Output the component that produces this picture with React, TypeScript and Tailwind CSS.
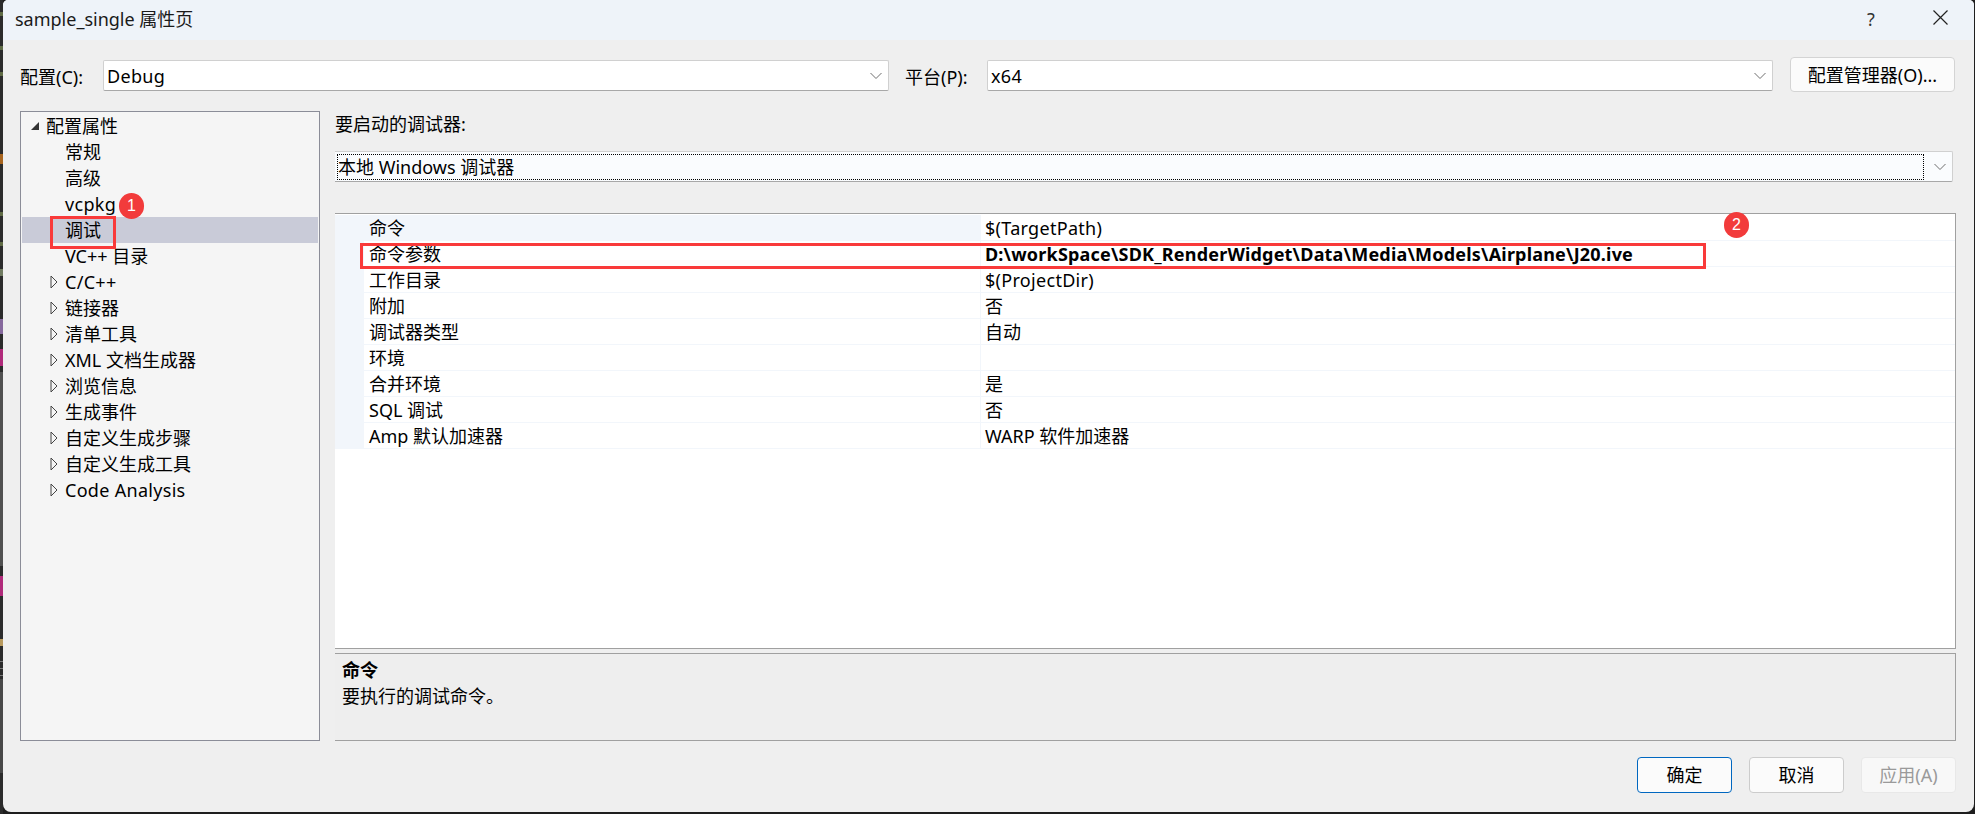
import React from 'react';

const treeItems = [
  { label: '常规' },
  { label: '高级' },
  { label: 'vcpkg', latin: true },
  { label: '调试', selected: true },
  { label: 'VC++ 目录' },
  { label: 'C/C++', arrow: true, latin: true },
  { label: '链接器', arrow: true },
  { label: '清单工具', arrow: true },
  { label: 'XML 文档生成器', arrow: true },
  { label: '浏览信息', arrow: true },
  { label: '生成事件', arrow: true },
  { label: '自定义生成步骤', arrow: true },
  { label: '自定义生成工具', arrow: true },
  { label: 'Code Analysis', arrow: true, latin: true },
];

const rows = [
  { name: '命令', value: '$(TargetPath)', tinted: true, latin: true },
  { name: '命令参数', value: 'D:\\workSpace\\SDK_RenderWidget\\Data\\Media\\Models\\Airplane\\J20.ive', bold: true },
  { name: '工作目录', value: '$(ProjectDir)', latin: true },
  { name: '附加', value: '否' },
  { name: '调试器类型', value: '自动' },
  { name: '环境', value: '' },
  { name: '合并环境', value: '是' },
  { name: 'SQL 调试', value: '否' },
  { name: 'Amp 默认加速器', value: 'WARP 软件加速器' },
];

function Chevron() {
  return (
    <svg width="14" height="8" viewBox="0 0 14 8" fill="none" stroke="#6f6f6f" strokeWidth="1">
      <path d="M1.5 1 L7 6.5 L12.5 1" />
    </svg>
  );
}

function Combo({ value, className }: { value: string; className: string }) {
  return (
    <div className={`h-[31px] mt-[3px] flex items-center justify-between bg-white border border-[#d0d0d0] border-b-[#a8a8a8] rounded-[2px] pl-[3px] pr-[5px] ${className}`}>
      <span className="tracking-[0.3px]">{value}</span>
      <Chevron />
    </div>
  );
}

function Badge({ n, className }: { n: string; className: string }) {
  return (
    <span className={`absolute w-[25px] h-[26px] rounded-full bg-[#f23b3b] text-white text-[16px] font-['Liberation_Sans',sans-serif] flex items-center justify-center ${className}`}>
      {n}
    </span>
  );
}

// window behind the dialog peeking out on the left edge
function EdgeStrip() {
  return (
    <div className="w-[3px] h-full flex-shrink-0 flex flex-col bg-[#2b2b2b]">
      <div className="h-[12px]" />
      <div className="h-[4px] bg-[#5f6b45]" />
      <div className="h-[30px]" />
      <div className="h-[4px] bg-[#5f6b45]" />
      <div className="h-[22px]" />
      <div className="h-[4px] bg-[#5f6b45]" />
      <div className="h-[78px]" />
      <div className="h-[10px] bg-[#a8651f]" />
      <div className="h-[48px]" />
      <div className="h-[4px] bg-[#5f6b45]" />
      <div className="h-[26px]" />
      <div className="h-[4px] bg-[#5f6b45]" />
      <div className="h-[23px]" />
      <div className="h-[7px] bg-[#6f7a60]" />
      <div className="h-[43px]" />
      <div className="h-[15px] bg-[#86699d]" />
      <div className="h-[15px]" />
      <div className="h-[17px] bg-[#b02a7a]" />
      <div className="h-[6px]" />
      <div className="h-[194px] bg-[#505050]" />
      <div className="h-[10px]" />
      <div className="h-[20px] bg-[#b02a7a]" />
      <div className="h-[43px]" />
      <div className="h-[7px] bg-[#b89a5e]" />
      <div className="h-[15px]" />
      <div className="h-px bg-[#777777]" />
      <div className="h-[6px]" />
      <div className="h-px bg-[#777777]" />
      <div className="h-[6px]" />
      <div className="h-px bg-[#777777]" />
      <div className="h-[3px]" />
      <div className="h-[94px] bg-[#484848]" />
    </div>
  );
}

export default function App() {
  return (
    <div className="w-[1975px] h-[814px] bg-[#1e1e1e] flex overflow-hidden font-['Noto_Sans','Noto_Sans_CJK_SC',sans-serif] text-[18px] leading-[26px] text-black">
      <EdgeStrip />
      <div className="flex-1 min-w-0 h-[812px] mr-[1px] bg-[#efefef] rounded-b-[8px] rounded-t-[5px] flex flex-col overflow-hidden">
        {/* title bar */}
        <div className="h-[40px] flex-shrink-0 bg-[#eef3f9] flex items-center pl-[12px] pb-[3px]">
          <span className="flex-1 text-[#1a1a1a]">sample_single 属性页</span>
          <span className="w-[20px] text-center text-[#333] mr-[52px]">?</span>
          <svg className="mr-[26px] mb-[3px]" width="15" height="15" viewBox="0 0 15 15" stroke="#222" strokeWidth="1.2">
            <path d="M0.5 0.5 L14.5 14.5 M14.5 0.5 L0.5 14.5" />
          </svg>
        </div>

        {/* config row */}
        <div className="flex items-start h-[35px] mt-[17px] pl-[17px] flex-shrink-0">
          <span className="w-[83px] mt-[7px]">配置(C):</span>
          <Combo value="Debug" className="w-[786px]" />
          <span className="ml-[16px] w-[82px] mt-[7px]">平台(P):</span>
          <Combo value="x64" className="w-[786px]" />
          <button className="ml-[17px] w-[165px] h-[35px] bg-[#fbfbfb] border border-[#d4d4d4] rounded-[4px]">配置管理器(O)...</button>
        </div>

        {/* main */}
        <div className="flex h-[630px] flex-shrink-0 mt-[19px] pl-[17px] pr-[18px]">
          <div className="relative w-[300px] bg-[#f5f5f5] border border-[#8b8d98] flex-shrink-0 pt-px px-px">
            <div className="h-[26px] flex items-center pl-[8px]">
              <svg width="10" height="10" viewBox="0 0 10 10" fill="#333">
                <path d="M9 1 V9 H1 Z" />
              </svg>
              <span className="ml-[6px]">配置属性</span>
            </div>
            {treeItems.map((item) => (
              <div key={item.label} className={`h-[26px] flex items-center ${item.selected ? 'bg-[#c9cbd8]' : ''}`}>
                <span className="w-[36px] flex-shrink-0 flex justify-end">
                  {item.arrow && (
                    <svg width="8" height="14" viewBox="0 0 8 14" fill="none" stroke="#444" strokeWidth="1">
                      <path d="M1 1 L7 7 L1 13 Z" />
                    </svg>
                  )}
                </span>
                <span className={`ml-[7px] ${item.latin ? 'tracking-[0.3px]' : ''}`}>{item.label}</span>
              </div>
            ))}
            <span className="absolute left-[29px] top-[104px] w-[66px] h-[33px] border-[3px] border-[#f93a3a]" />
            <Badge n="1" className="left-[98px] top-[81px]" />
          </div>

          <div className="flex-1 ml-[15px] flex flex-col min-w-0">
            <div className="h-[26px]">要启动的调试器:</div>
            <div className="mt-[14px] h-[31px] w-[1618px] bg-[#fafcfe] border-y border-r border-[#d0d0d0] border-b-[#a8a8a8] flex items-center justify-between pr-[5px] rounded-r-[2px]">
              <span className="ml-[2px] flex-1 h-[26px] pl-[1px] outline-1 outline-dotted outline-black -outline-offset-1 mr-[9px]">本地 Windows 调试器</span>
              <Chevron />
            </div>

            {/* property grid */}
            <div className="relative mt-[31px] h-[436px] pt-px bg-white border-y border-r border-[#a0a0a0] flex-shrink-0">
              {rows.map((row) => (
                <div key={row.name} className="h-[26px] flex border-b border-[#f2f6fb] bg-white">
                  <div className="w-[29px] flex-shrink-0 bg-[#f2f6fb]" />
                  <div className={`w-[617px] flex-shrink-0 pl-[5px] border-r border-[#f2f6fb] ${row.tinted ? 'bg-[#f2f6fb]' : ''}`}>{row.name}</div>
                  <div className={`pl-[4px] whitespace-nowrap ${row.bold ? 'font-bold tracking-[0.19px]' : ''} ${row.latin ? 'tracking-[0.3px]' : ''}`}>{row.value}</div>
                </div>
              ))}
              <span className="absolute left-[25px] top-[29px] w-[1346px] h-[26px] border-[3px] border-[#f93a3a]" />
              <Badge n="2" className="left-[1389px] top-[-2px]" />
            </div>

            {/* description */}
            <div className="mt-[4px] h-[88px] border-y border-r border-[#a0a0a0] bg-[#eeeeee] pl-[7px] pt-[3px]">
              <div className="font-bold">命令</div>
              <div>要执行的调试命令。</div>
            </div>
          </div>
        </div>

        {/* footer */}
        <div className="flex-1 flex justify-end gap-[17px] pr-[18px] pt-[16px]">
          <button className="w-[95px] h-[36px] bg-[#fbfbfb] border border-[#0067c0] rounded-[4px]">确定</button>
          <button className="w-[95px] h-[36px] bg-[#fbfbfb] border border-[#cccccc] rounded-[4px]">取消</button>
          <button className="w-[95px] h-[36px] bg-[#f8f8f8] border border-[#e8e8e8] rounded-[4px] text-[#9a9a9a]">应用(A)</button>
        </div>
      </div>
    </div>
  );
}
